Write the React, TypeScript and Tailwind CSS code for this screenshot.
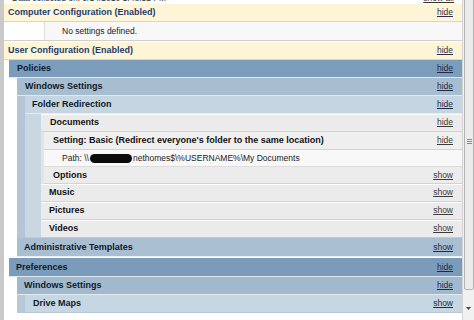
type RowProps = {
  title: string;
  link?: string;
  className: string;
  linkClass?: string;
  bold?: boolean;
};

function Row({ title, link, className, linkClass, bold = true }: RowProps) {
  return (
    <div className={`flex items-center justify-between border-b pr-[9px] ${className}`}>
      <span className={bold ? "text-[9px] font-bold leading-none" : "text-[8.5px] leading-none"}>{title}</span>
      {link && <a className={`text-[8.5px] leading-none underline ${linkClass ?? ""}`}>{link}</a>}
    </div>
  );
}

const yellow = "h-[18px] bg-[#fdf5d6] border-[#d9d6c9] pl-[4px] text-[#1f3b6d]";
const blueLink = "text-[#1a2b4d]";
const greyLink = "text-[#3b3b3b]";

function Scrollbar() {
  return (
    <div className="flex w-[12px] shrink-0 flex-col border-l border-[#d4d4d4] bg-[#f1f1f1]">
      <div className="-mt-[4px] ml-[1px] flex h-[294px] w-[10px] flex-col items-center justify-center rounded-[2px] border border-[#b3b3b3] bg-[#ebebeb] pb-[4px]">
        <div className="flex flex-col gap-[1px]">
          <div className="h-px w-[5px] bg-[#8a8a8a]" />
          <div className="h-px w-[5px] bg-[#8a8a8a]" />
          <div className="h-px w-[5px] bg-[#8a8a8a]" />
        </div>
      </div>
      <div className="flex flex-1 items-center justify-center pt-[6px]">
        <svg width="5" height="3" viewBox="0 0 5 3">
          <path d="M0 0 L5 0 L2.5 3 Z" fill="#444" />
        </svg>
      </div>
    </div>
  );
}

export default function App() {
  return (
    <div className="flex h-[320px] w-[474px] overflow-hidden bg-white font-['Liberation_Sans',Arial,sans-serif] text-[#111]">
      <div className="w-[4px] shrink-0 bg-[#c9c9c9]" />
      <div className="flex w-[458px] shrink-0 flex-col">
        {/* clipped header line */}
        <div className="h-[4px] overflow-hidden">
          <div className="-mt-[8px] flex h-[12px] items-center justify-between pl-[8px] pr-[8px] text-[8.5px] text-[#333]">
            <span>Data collected on: 9/14/2010 1:48:52 PM</span>
            <a className="underline">show all</a>
          </div>
        </div>

        <Row title="Computer Configuration (Enabled)" link="hide" className={yellow} linkClass="text-[#2b2f4f]" />
        <div className="flex h-[19px] border-b border-[#cfcfcf]">
          <div className="w-[40px]" />
          <div className="flex flex-1 items-center border-l border-[#dcdcdc] bg-[#f8f8f8] pl-[17px] text-[8.5px] leading-none text-[#222]">
            No settings defined.
          </div>
        </div>
        <div className="h-px" />
        <Row title="User Configuration (Enabled)" link="hide" className={yellow} linkClass="text-[#2b2f4f]" />

        {/* Policies */}
        <div className="ml-[5px] flex flex-col">
          <Row title="Policies" link="hide" className="h-[18px] border-[#dfe7ee] bg-[#7b9cba] pl-[8px] text-[#0e1a2c]" linkClass={blueLink} />
          <div className="flex flex-col pl-[8px]">
            <Row title="Windows Settings" link="hide" className="h-[18px] border-[#e2e9ef] bg-[#a7bdd0] pl-[8px] text-[#0e1a2c]" linkClass={blueLink} />
            <div className="flex flex-col bg-[#b4c6d6] pl-[8px]">
              <Row title="Folder Redirection" link="hide" className="h-[18px] border-[#e6edf2] bg-[#c5d5e2] pl-[7px] text-[#0e1a2c]" linkClass={blueLink} />
              <div className="flex flex-col border-b border-[#c9c9c9] bg-[#c9d7e3] pl-[16px]">
                <Row title="Documents" link="hide" className="h-[18px] border-[#d3d3d3] bg-[#ebebeb] pl-[9px] shadow-[inset_0_1px_0_#fff]" linkClass={greyLink} />
                <div className="flex flex-col bg-[#e4e4e4] pl-[3px]">
                  <Row
                    title="Setting: Basic (Redirect everyone's folder to the same location)"
                    link="hide"
                    className="h-[18px] border-[#d3d3d3] bg-[#efefef] pl-[9px]"
                    linkClass={greyLink}
                  />
                  <div className="flex h-[17px] items-center border-b border-[#dcdcdc] bg-[#f8f8f8] pl-[18px] text-[8.5px] leading-none text-[#222]">
                    <span>Path: \\</span>
                    <span className="mx-[1px] inline-block h-[9px] w-[42px] rounded-full bg-[#0b0b0b]" />
                    <span>nethomes$\%USERNAME%\My Documents</span>
                  </div>
                  <Row title="Options" link="show" className="h-[17px] border-[#d3d3d3] bg-[#ececec] pl-[9px]" linkClass={greyLink} />
                </div>
                <Row title="Music" link="show" className="h-[18px] border-[#d3d3d3] bg-[#ebebeb] pl-[8px] shadow-[inset_0_1px_0_#fff]" linkClass={greyLink} />
                <Row title="Pictures" link="show" className="h-[18px] border-[#d3d3d3] bg-[#ebebeb] pl-[8px] shadow-[inset_0_1px_0_#fff]" linkClass={greyLink} />
                <Row title="Videos" link="show" className="h-[17px] border-transparent bg-[#ebebeb] pl-[8px] shadow-[inset_0_1px_0_#fff]" linkClass={greyLink} />
              </div>
            </div>
            <Row title="Administrative Templates" link="show" className="h-[19px] border-[#e9eef2] bg-[#a9bed0] pl-[7px] text-[#0e1a2c]" linkClass={blueLink} />
          </div>
        </div>

        <div className="h-px" />

        {/* Preferences */}
        <div className="ml-[5px] flex flex-col">
          <Row title="Preferences" link="hide" className="h-[19px] border-[#dfe7ee] bg-[#7a9bb9] pl-[7px] text-[#0e1a2c]" linkClass={blueLink} />
          <div className="flex flex-col pl-[8px]">
            <Row title="Windows Settings" link="hide" className="h-[18px] border-[#e2e9ef] bg-[#a1b9cd] pl-[7px] text-[#0e1a2c]" linkClass={blueLink} />
            <div className="flex flex-col bg-[#b7c8d7] pl-[8px]">
              <Row title="Drive Maps" link="show" className="h-[18px] border-[#b9c7d3] bg-[#c6d6e3] pl-[8px] text-[#0e1a2c]" linkClass={blueLink} />
            </div>
          </div>
        </div>
      </div>
      <Scrollbar />
    </div>
  );
}
